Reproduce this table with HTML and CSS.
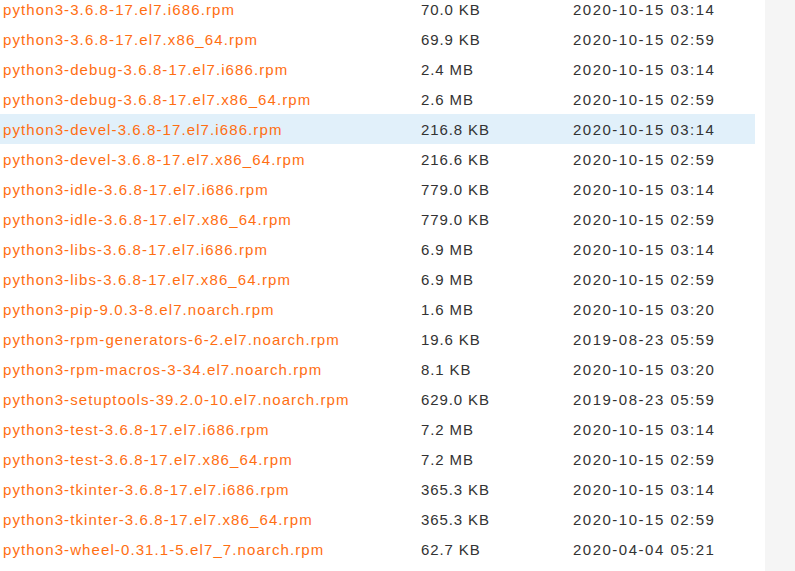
FILE: index.html
```html
<!DOCTYPE html>
<html>
<head>
<meta charset="utf-8">
<link rel="stylesheet" href="styles.css">
</head>
<body>
<div class="page">
  <div class="list">
    <div class="row"><a class="name">python3-3.6.8-17.el7.i686.rpm</a><span class="size">70.0 KB</span><span class="date">2020-10-15 03:14</span></div>
    <div class="row"><a class="name">python3-3.6.8-17.el7.x86_64.rpm</a><span class="size">69.9 KB</span><span class="date">2020-10-15 02:59</span></div>
    <div class="row"><a class="name">python3-debug-3.6.8-17.el7.i686.rpm</a><span class="size">2.4 MB</span><span class="date">2020-10-15 03:14</span></div>
    <div class="row"><a class="name">python3-debug-3.6.8-17.el7.x86_64.rpm</a><span class="size">2.6 MB</span><span class="date">2020-10-15 02:59</span></div>
    <div class="row hover"><a class="name">python3-devel-3.6.8-17.el7.i686.rpm</a><span class="size">216.8 KB</span><span class="date">2020-10-15 03:14</span></div>
    <div class="row"><a class="name">python3-devel-3.6.8-17.el7.x86_64.rpm</a><span class="size">216.6 KB</span><span class="date">2020-10-15 02:59</span></div>
    <div class="row"><a class="name">python3-idle-3.6.8-17.el7.i686.rpm</a><span class="size">779.0 KB</span><span class="date">2020-10-15 03:14</span></div>
    <div class="row"><a class="name">python3-idle-3.6.8-17.el7.x86_64.rpm</a><span class="size">779.0 KB</span><span class="date">2020-10-15 02:59</span></div>
    <div class="row"><a class="name">python3-libs-3.6.8-17.el7.i686.rpm</a><span class="size">6.9 MB</span><span class="date">2020-10-15 03:14</span></div>
    <div class="row"><a class="name">python3-libs-3.6.8-17.el7.x86_64.rpm</a><span class="size">6.9 MB</span><span class="date">2020-10-15 02:59</span></div>
    <div class="row"><a class="name">python3-pip-9.0.3-8.el7.noarch.rpm</a><span class="size">1.6 MB</span><span class="date">2020-10-15 03:20</span></div>
    <div class="row"><a class="name">python3-rpm-generators-6-2.el7.noarch.rpm</a><span class="size">19.6 KB</span><span class="date">2019-08-23 05:59</span></div>
    <div class="row"><a class="name">python3-rpm-macros-3-34.el7.noarch.rpm</a><span class="size">8.1 KB</span><span class="date">2020-10-15 03:20</span></div>
    <div class="row"><a class="name">python3-setuptools-39.2.0-10.el7.noarch.rpm</a><span class="size">629.0 KB</span><span class="date">2019-08-23 05:59</span></div>
    <div class="row"><a class="name">python3-test-3.6.8-17.el7.i686.rpm</a><span class="size">7.2 MB</span><span class="date">2020-10-15 03:14</span></div>
    <div class="row"><a class="name">python3-test-3.6.8-17.el7.x86_64.rpm</a><span class="size">7.2 MB</span><span class="date">2020-10-15 02:59</span></div>
    <div class="row"><a class="name">python3-tkinter-3.6.8-17.el7.i686.rpm</a><span class="size">365.3 KB</span><span class="date">2020-10-15 03:14</span></div>
    <div class="row"><a class="name">python3-tkinter-3.6.8-17.el7.x86_64.rpm</a><span class="size">365.3 KB</span><span class="date">2020-10-15 02:59</span></div>
    <div class="row"><a class="name">python3-wheel-0.31.1-5.el7_7.noarch.rpm</a><span class="size">62.7 KB</span><span class="date">2020-04-04 05:21</span></div>
  </div>
  <div class="side"></div>
</div>
</body>
</html>
```
FILE: styles.css
```css
html, body {
  margin: 0;
  padding: 0;
  background: #fff;
  overflow: hidden;
}
body {
  font-family: "Liberation Sans", Arial, sans-serif;
  font-size: 15px;
  color: #333;
  letter-spacing: 1.1px;
}
.page {
  display: flex;
  height: 571px;
}
.list {
  width: 755px;
  margin-top: -6px;
  flex: none;
}
.side {
  margin-left: 10px;
  flex: 1;
  background: #f5f5f5;
}
.row {
  display: grid;
  grid-template-columns: 418px 152px 1fr;
  height: 30px;
  align-items: center;
  padding-left: 3px;
  white-space: nowrap;
}
.row.hover {
  background: #e1f0fa;
}
.name {
  color: #ff6e12;
  text-decoration: none;
}
.size {
  color: #333;
  letter-spacing: 0.9px;
}
.date {
  color: #333;
  letter-spacing: 1.5px;
}
```
